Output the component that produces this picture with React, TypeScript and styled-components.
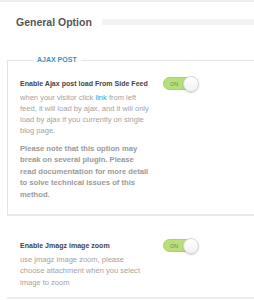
import React from "react";
import styled, { createGlobalStyle } from "styled-components";

const Global = createGlobalStyle`
  html, body { margin: 0; padding: 0; background: #fff; }
  body { font-family: "Liberation Sans", Arial, sans-serif; overflow: hidden; }
`;

const Page = styled.div`
  width: 254px;
  height: 300px;
  border-top: 2px solid #ececec;
  box-sizing: border-box;
  overflow: hidden;
`;

const Header = styled.div`
  display: flex;
  align-items: center;
  padding: 14px 0 0 16px;
`;

const Title = styled.h2`
  margin: 0;
  font-size: 10.5px;
  line-height: 12px;
  font-weight: bold;
  color: #555;
  white-space: nowrap;
`;

const HeaderBar = styled.div`
  flex: 1;
  height: 6px;
  margin-left: 10px;
  background: #f3f3f3;
`;

const Group = styled.fieldset`
  margin: 27px -20px 0 7px;
  padding: 13px 0 13.5px 12px;
  border: 1px solid #e4e4e4;
  border-bottom: 2px solid #e8e8e8;
  min-width: 0;
`;

const Legend = styled.legend`
  margin-left: 13px;
  padding: 0 4px;
  font-size: 7px;
  line-height: 10px;
  font-weight: bold;
  color: #3b8fc6;
  text-transform: uppercase;
`;

const Section = styled.div`
  margin: 24.5px 0 0 7px;
  padding: 0 0 8.5px 13px;
  border-bottom: 2px solid #ececec;
`;

const Row = styled.div`
  display: flex;
  align-items: flex-start;
`;

const TextCol = styled.div`
  width: 143px;
  flex: none;
`;

const OptionTitle = styled.div`
  font-size: 7.05px;
  line-height: 11px;
  font-weight: bold;
  color: #444;
  white-space: nowrap;
`;

const Desc = styled.p<{ $bold?: boolean; $gap?: number }>`
  margin: ${(p) => p.$gap ?? 2.5}px 0 0;
  font-size: ${(p) => (p.$bold ? 7.65 : 7.55)}px;
  line-height: ${(p) => (p.$bold ? 11.5 : 11.3)}px;
  font-weight: ${(p) => (p.$bold ? "bold" : "normal")};
  color: ${(p) => (p.$bold ? "#9a9a9a" : "#a3a3a3")};
  white-space: nowrap;
`;

const Link = styled.a`
  color: #3a9ad9;
  text-decoration: none;
`;

const Toggle = styled.div`
  position: relative;
  width: 35px;
  height: 13px;
  margin-top: -1px;
  box-sizing: border-box;
  border-radius: 7px;
  background: #b7df7d;
  border: 1px solid #a8d26a;
  display: flex;
  align-items: center;
  padding-left: 6px;
  font-size: 5.5px;
  font-weight: normal;
  color: #6f8f45;
`;

const Knob = styled.span`
  position: absolute;
  right: -2px;
  top: -2.5px;
  width: 16px;
  height: 16px;
  box-sizing: border-box;
  border-radius: 50%;
  background: linear-gradient(#ffffff, #f2f2f2);
  border: 1px solid #d6d6d6;
  box-shadow: 0 1px 1.5px rgba(0, 0, 0, 0.18);
`;

function Switch() {
  return (
    <Toggle>
      ON
      <Knob />
    </Toggle>
  );
}

export default function App() {
  return (
    <Page>
      <Global />
      <Header>
        <Title>General Option</Title>
        <HeaderBar />
      </Header>
      <Group>
        <Legend>Ajax Post</Legend>
        <Row>
          <TextCol>
            <OptionTitle>Enable Ajax post load From Side Feed</OptionTitle>
            <Desc>
              when your visitor click <Link href="#">link</Link> from left
              <br />
              feed, it will load by ajax. and it will only
              <br />
              load by ajax if you currently on single
              <br />
              blog page.
            </Desc>
            <Desc $bold $gap={6}>
              Please note that this option may
              <br />
              break on several plugin. Please
              <br />
              read documentation for more detail
              <br />
              to solve technical issues of this
              <br />
              method.
            </Desc>
          </TextCol>
          <Switch />
        </Row>
      </Group>
      <Section>
        <Row>
          <TextCol>
            <OptionTitle>Enable Jmagz image zoom</OptionTitle>
            <Desc $gap={3}>
              use jmagz image zoom, please
              <br />
              choose attachment when you select
              <br />
              image to zoom
            </Desc>
          </TextCol>
          <Switch />
        </Row>
      </Section>
    </Page>
  );
}
